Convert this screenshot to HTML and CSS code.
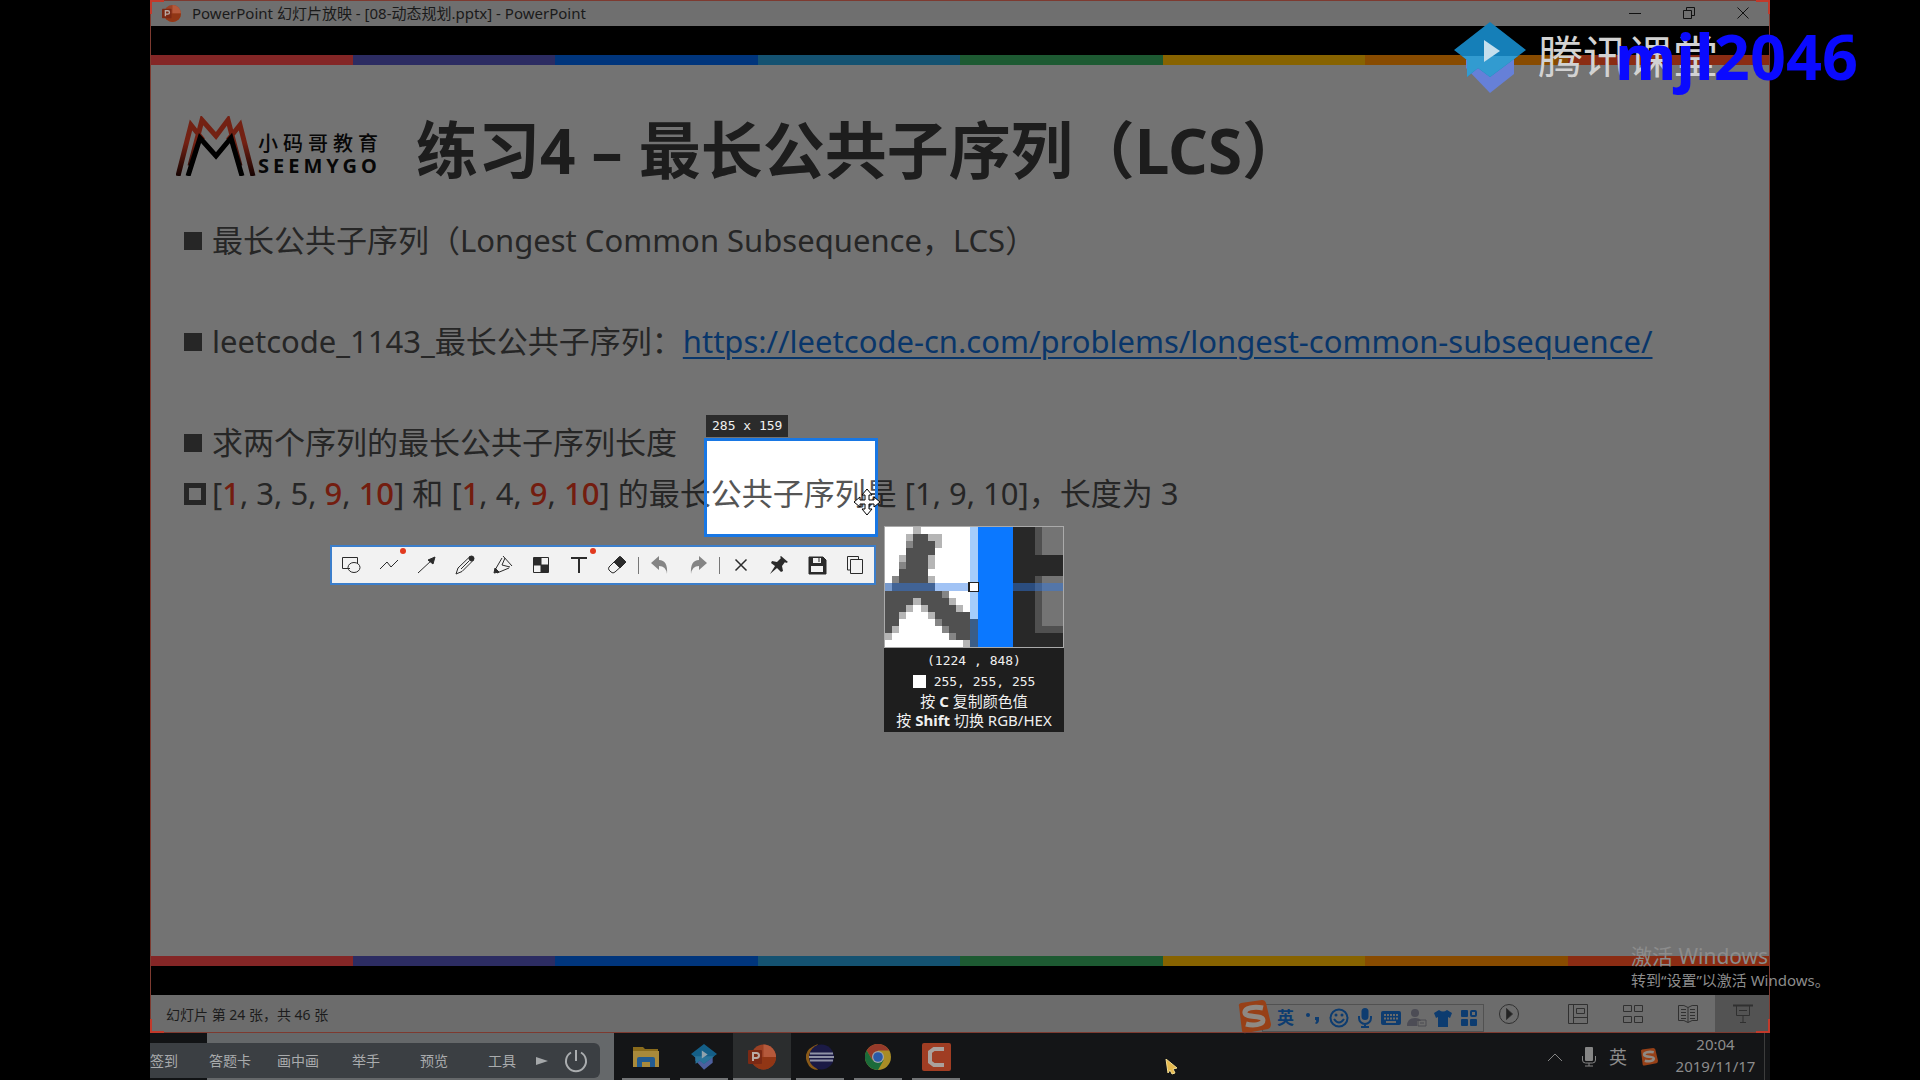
FILE: index.html
```html
<!DOCTYPE html>
<html lang="zh-CN">
<head>
    <meta charset="UTF-8">
    <meta name="viewport" content="width=device-width, initial-scale=1.0">
    <title>08-动态规划.pptx</title>
    <link rel="stylesheet" href="styles.css">
</head>
<body>
    <!-- shared shapes -->
    <svg class="defs" width="0" height="0">
        <symbol id="ppt" viewBox="0 0 28 26">
            <circle cx="15.5" cy="13" r="12.5" fill="#9c4124"/>
            <path d="M15.5 .5A12.500 12.500 0 0 1 28 13H15.500z" fill="#b5593b"/>
            <path d="M28 13a12.500 12.500 0 0 1-25 0z" fill="#913615"/>
            <rect x="0" y="6" width="14" height="14" rx="1" fill="#7b2914"/>
            <path d="M5 17V9h3.500a2.500 2.500 0 0 1 0 5H5" fill="none" stroke="#b9aaa5" stroke-width="2"/>
        </symbol>
        <symbol id="classroom" viewBox="0 0 72 72">
            <path d="M12 46V36h48v16L36 71z" fill="#6680d8"/>
            <path d="M0 28 36 0l36 28-36 27-12-9-11 9V38z" fill="#157fb8"/>
            <path d="M8 34h56L36 55l-12-9-11 9V38z" fill="#329bd0"/>
            <path d="M30 18v22l16-11z" fill="#c5dfed"/>
        </symbol>
        <symbol id="sogou" viewBox="0 0 34 34">
            <path d="M2 6Q1 4 4 3L25 0q3 0 4 3l5 21q0 4-3 5L9 33q-3 1-4-2z" fill="#974017"/>
            <path d="M26 8C17 6 7 8 8 13s18 2 18 7-10 6-17 4" fill="none" stroke="#8f8983" stroke-width="5"/>
        </symbol>
    </svg>

    <div class="recording">
        <header class="titlebar">
            <svg class="title-icon" width="19" height="19"><use href="#ppt"/></svg>
            <span class="title-text">PowerPoint 幻灯片放映 - [08-动态规划.pptx] - PowerPoint</span>
            <div class="window-buttons">
                <button type="button" aria-label="最小化"><svg width="12" height="12" viewBox="0 0 12 12"><path d="M0 6.500h12"/></svg></button>
                <button type="button" aria-label="还原"><svg width="12" height="12" viewBox="0 0 12 12"><path d="M.5 3.500h8v8h-8zM3.500 3.500v-3h8v8h-3"/></svg></button>
                <button type="button" aria-label="关闭"><svg width="12" height="12" viewBox="0 0 12 12"><path d="M.5.500l11 11M11.500.500l-11 11"/></svg></button>
            </div>
        </header>

        <div class="letterbox"></div>
        <div class="stripe"><i class="s1"></i><i class="s2"></i><i class="s3"></i><i class="s4"></i><i class="s5"></i><i class="s6"></i><i class="s7"></i><i class="s8"></i></div>

        <main class="slide">
            <div class="slide-head">
                <div class="brand">
                    <svg width="80" height="60" viewBox="0 0 80 60">
                        <defs>
                            <linearGradient id="mred" x1="0" y1="0" x2="0" y2="1">
                                <stop offset="0.4" stop-color="#ff4a2c"/><stop offset="1" stop-color="#300804"/>
                            </linearGradient>
                        </defs>
                        <path d="M2 60 15 9l12 15M14 50 26 4l14 16L52 4l12 46M52 24 64 9l13 51" fill="none" stroke="url(#mred)" stroke-width="5"/>
                        <path d="M12 60 24 22l16 18 15-18 11 38" fill="none" stroke="#000" stroke-width="5"/>
                    </svg>
                    <div class="brand-text">
                        <span class="brand-cn">小码哥教育</span>
                        <span class="brand-en">SEEMYGO</span>
                    </div>
                </div>
                <h1>练习4 – 最长公共子序列（LCS）</h1>
            </div>
            <ul class="points">
                <li>最长公共子序列（Longest Common Subsequence，LCS）</li>
                <li class="spaced">leetcode_1143_最长公共子序列：<a href="https://leetcode-cn.com/problems/longest-common-subsequence/">https://leetcode-cn.com/problems/longest-common-subsequence/</a></li>
                <li class="spaced">求两个序列的最长公共子序列长度</li>
                <li class="hollow">[<b>1</b>, 3, 5, <b>9</b>, <b>10</b>] 和 [<b>1</b>, 4, <b>9</b>, <b>10</b>] 的最长公共子序列是 [1, 9, 10]，长度为 3</li>
            </ul>
            <!-- everything outside the selection is dimmed by its shadow -->
            <div class="selection"></div>
        </main>

        <div class="stripe"><i class="s1"></i><i class="s2"></i><i class="s3"></i><i class="s4"></i><i class="s5"></i><i class="s6"></i><i class="s7"></i><i class="s8"></i></div>
        <div class="letterbox"></div>

        <footer class="statusbar">
            <span class="page-count">幻灯片 第 24 张，共 46 张</span>
            <div class="views">
                <button type="button" class="play" aria-label="播放"><svg width="22" height="22" viewBox="0 0 22 22"><circle cx="11" cy="11" r="9.500"/><path d="M8.500 5.500v11l6-5.500z" fill="#222"/></svg></button>
                <button type="button" aria-label="普通视图"><svg width="20" height="20" viewBox="0 0 20 20"><path d="M.5.500h19v19H.5zM5.500.500v19M5.500 13.500h14M8.500 4.500h8v5h-8z"/></svg></button>
                <button type="button" aria-label="浏览"><svg width="20" height="20" viewBox="0 0 20 20"><path d="M.5 1.500h8v6h-8zM11.500 1.500h8v6h-8zM.5 12.500h8v6h-8zM11.500 12.500h8v6h-8z"/></svg></button>
                <button type="button" aria-label="阅读视图"><svg width="20" height="20" viewBox="0 0 20 20"><path d="M.5 1.500q6-1 9.500 2 3.500-3 9.500-2v15q-6-1-9.500 2-3.500-3-9.500-2zM10 3.500v15M3 5.500h5M3 8.500h5M3 11.500h5M3 14.500h5M12 5.500h5M12 8.500h5M12 11.500h5M12 14.500h5"/></svg></button>
                <button type="button" class="active" aria-label="幻灯片放映"><svg width="20" height="20" viewBox="0 0 20 20"><path d="M0 1.500h20" stroke-width="2"/><path d="M3.500 2v9.500h13V2M6 6.500h8M10 12v6.500M7 18.500h6"/></svg></button>
            </div>
            <div class="ime">
                <svg class="ime-logo" width="34" height="34"><use href="#sogou"/></svg>
                <span class="ime-lang">英</span>
                <svg viewBox="0 0 20 20"><circle cx="5" cy="7" r="2"/><path d="M12 9h4v3q0 3-3 4l-1-1q2-1 1-3h-1z"/></svg>
                <svg viewBox="0 0 20 20"><circle cx="10" cy="10" r="8.500" class="line"/><circle cx="7" cy="7" r="1.500"/><circle cx="13" cy="7" r="1.500"/><path d="M5 11q5 7 10 0" class="line"/></svg>
                <svg viewBox="0 0 20 20"><rect x="6.500" y="0" width="7" height="12" rx="3.500"/><path d="M4 8v2a6 6 0 0 0 12 0V8M10 16v3M6 19h8" class="line"/></svg>
                <svg viewBox="0 0 20 20"><rect x="0" y="3" width="20" height="14" rx="2"/><path d="M3 7h14M3 10.500h14" stroke="#6a6a6a" stroke-width="2" stroke-dasharray="2 1"/><path d="M5 14h10" stroke="#6a6a6a" stroke-width="2"/></svg>
                <svg viewBox="0 0 20 20" class="muted"><circle cx="8" cy="5" r="4"/><path d="M0 18q0-8 8-8 5 0 6 3h-4v5z"/><path d="M11 12h8v6h-8zM13 15h4" fill="none" stroke="#4a4a50"/></svg>
                <svg viewBox="0 0 20 20"><path d="M6 2q4 3 8 0l5 3-2 5-2-1v10H5V9l-2 1-2-5z"/></svg>
                <svg viewBox="0 0 20 20"><rect x="2" y="2" width="7" height="7" rx="1"/><rect x="2" y="11" width="7" height="7" rx="1"/><rect x="11" y="11" width="7" height="7" rx="1"/><rect x="12" y="3" width="5" height="5" rx="1" class="line"/></svg>
            </div>
        </footer>

        <div class="frame"><i class="tl"></i><i class="tr"></i><i class="bl"></i><i class="br"></i></div>

        <nav class="taskbar">
            <div class="class-area">
                <div class="class-bar">
                    <button type="button">签到</button>
                    <button type="button">答题卡</button>
                    <button type="button">画中画</button>
                    <button type="button">举手</button>
                    <button type="button">预览</button>
                    <button type="button">工具</button>
                    <svg class="more" width="12" height="8" viewBox="0 0 12 8"><path d="M0 0l12 4-12 4z" fill="#a5a8aa"/></svg>
                    <svg class="power" width="24" height="24" viewBox="0 0 24 24"><path d="M7 3.500a10 10 0 1 0 10 0M12 1v11" fill="none" stroke="#aaadaf" stroke-width="2"/></svg>
                </div>
            </div>
            <div class="apps">
                <a href="#" aria-label="文件资源管理器"><svg width="26" height="22" viewBox="0 0 26 22"><path d="M0 1h10l2 2h13v18H0z" fill="#8a6b1c"/><path d="M0 5h26v16H0z" fill="#a98a3b"/><path d="M4 21v-8q0-2 2-2h14q2 0 2 2v8h-5v-5H9v5z" fill="#225b91"/></svg></a>
                <a href="#" aria-label="腾讯课堂"><svg class="dim" width="28" height="26"><use href="#classroom"/></svg></a>
                <a href="#" class="active" aria-label="PowerPoint"><svg width="28" height="26"><use href="#ppt"/></svg></a>
                <a href="#" aria-label="Eclipse"><svg width="28" height="26" viewBox="0 0 28 26"><path d="M12 0Q-4 6 1 18q3 8 11 8Q2 14 12 0z" fill="#8a5a18"/><circle cx="15.500" cy="13" r="12.500" fill="#1b1a45"/><path d="M4 9.500h23M3 13h25M4 16.500h23" stroke="#8f92a6" stroke-width="2"/></svg></a>
                <a href="#" aria-label="Chrome"><svg width="26" height="26" viewBox="0 0 26 26"><circle cx="13" cy="13" r="13" fill="#a88c26"/><path d="M1.700 6.500A13 13 0 0 1 24.300 6.500H13L7.400 16.200z" fill="#963a2a"/><path d="M1.700 6.500A13 13 0 0 0 13 26l5.600-9.800H7.400z" fill="#1b6b3a"/><circle cx="13" cy="13" r="6" fill="#a0a4a8"/><circle cx="13" cy="13" r="4.800" fill="#2a5aa8"/></svg></a>
                <a href="#" aria-label="Camtasia"><svg width="29" height="28" viewBox="0 0 29 28"><rect width="29" height="28" rx="2" fill="#a03d23"/><path d="M22 6H12L8 9v10l4 3h10" fill="none" stroke="#aaa19d" stroke-width="4"/></svg></a>
            </div>
            <div class="tray">
                <svg class="chevron" width="16" height="16" viewBox="0 0 16 16"><path d="M1 12l7-7 7 7" fill="none" stroke="#858585"/></svg>
                <svg width="14" height="20" viewBox="0 0 14 20"><rect x="3" y="0" width="8" height="14" rx="1" fill="#858585"/><path d="M.5 9v4q0 3 3 3h7q3 0 3-3V9M7 16v3M3 19h8" fill="none" stroke="#858585"/></svg>
                <span class="tray-lang">英</span>
                <svg width="18" height="18"><use href="#sogou"/></svg>
                <div class="clock"><span>20:04</span><span>2019/11/17</span></div>
            </div>
        </nav>

        <!-- screenshot tool, floating over the slide -->
        <div class="size-tip">285 x 159</div>
        <div class="toolbar">
            <button type="button" aria-label="形状"><svg viewBox="0 0 20 20"><path d="M9 13.500H1.500v-11h15V8"/><ellipse cx="13" cy="12.500" rx="6" ry="5"/></svg></button>
            <button type="button" class="dot" aria-label="折线"><svg viewBox="0 0 20 20"><path d="M1 14l7-7 4 5 7-7"/></svg></button>
            <button type="button" aria-label="箭头"><svg viewBox="0 0 20 20"><path d="M1 18L15 5"/><path d="M18 2l-2 7-5-4z" class="fill"/></svg></button>
            <button type="button" aria-label="铅笔"><svg viewBox="0 0 20 20"><path d="M1 19l2-6L15 1.500l3.500 3.500L7 16.500zM14 6l-8 8"/><circle cx="16.500" cy="3.500" r="2.500" class="fill"/></svg></button>
            <button type="button" aria-label="记号笔"><svg viewBox="0 0 20 20"><path d="M10 1l9 10M9 3L2 15l2 3 12-5M12 3l-3 7 8 2"/><path d="M1 18l1-5 4 4z" class="fill"/></svg></button>
            <button type="button" aria-label="马赛克"><svg viewBox="0 0 20 20"><path d="M2.500 2.500h15v15h-15z"/><path d="M3 3h7v7H3zM10 10h7v7h-7z" class="fill"/></svg></button>
            <button type="button" class="dot" aria-label="文字"><svg viewBox="0 0 20 20"><path d="M2 3h16M10 3v15" stroke-width="2"/></svg></button>
            <button type="button" aria-label="橡皮"><svg viewBox="0 0 20 20"><path d="M2 12L12 2q1-1 3 1l3 3q1 1 0 2L8 17q-2 2-4 0l-2-2q-1-1 0-3z"/><path d="M7 7l5-5q1-1 3 1l3 3q1 1 0 2l-5 5z" class="fill"/></svg></button>
            <i class="sep"></i>
            <button type="button" class="off" aria-label="撤销"><svg viewBox="0 0 20 20"><path d="M1 8l8-7v4q9 0 8 14-1-8-8-8v4z"/></svg></button>
            <button type="button" class="off" aria-label="重做"><svg viewBox="0 0 20 20"><path d="M19 8l-8-7v4Q2 5 3 19q1-8 8-8v4z"/></svg></button>
            <i class="sep"></i>
            <button type="button" aria-label="关闭截图"><svg viewBox="0 0 20 20"><path d="M4.500 4.500l11 11M15.500 4.500l-11 11" stroke-width="1.500"/></svg></button>
            <button type="button" aria-label="贴图"><svg viewBox="0 0 20 20"><path d="M12 1l7 6-2 1-1-1-3 4 1 5-2 1-4-4-7 6 5-8-4-3 1-2 5 1 4-4-1-1z" class="fill" stroke="none"/></svg></button>
            <button type="button" aria-label="保存"><svg viewBox="0 0 20 20"><path d="M2 2h14l3 3v14H2z" class="fill"/><path d="M6 3h8v5H6zM4 11h12v6H4z" fill="#f2f2f2" stroke="none"/><path d="M12 3v4"/></svg></button>
            <button type="button" aria-label="复制"><svg viewBox="0 0 20 20"><path d="M5.500 4.500h12v14h-12zM5 15H2.500V1.500h11V4"/></svg></button>
        </div>

        <div class="magnifier">
            <svg class="lens" viewBox="0 0 25 17" preserveAspectRatio="none" shape-rendering="crispEdges">
                <rect width="25" height="17" fill="#fff"/>
                <path fill="#b5b5b5" d="M4 0h1v1h-1zM3 1h1v1h-1zM6 1h2v1h-2zM7 2h1v1h-1zM2 4h1v1h-1zM6 4h1v2h-1zM6 7h1v1h-1zM0 8h1v1h-1zM4 10h1v1h-1zM3 11h1v1h-1zM5 11h1v1h-1zM9 10h1v1h-1zM10 11h1v1h-1zM2 12h1v1h-1zM6 12h1v1h-1zM1 14h1v1h-1zM0 15h1v1h-1zM11 16h1v1h-1z"/>
                <path fill="#858585" d="M3 2h1v1h-1zM2 5h1v1h-1zM1 7h1v1h-1zM8 9h1v1h-1zM7 13h1v1h-1zM8 14h1v1h-1zM9 15h1v1h-1z"/>
                <path fill="#505050" d="M4 1h2v1h-2zM4 2h3v1h-3zM3 3h4v1h-4zM3 4h3v2h-3zM2 6h4v1h-4zM2 7h4v1h-4zM1 8h6v1h-6zM0 9h8v1h-8zM0 10h4v1h-4zM5 10h4v1h-4zM0 11h3v1h-3zM6 11h4v1h-4zM0 12h2v2h-2zM7 12h5v1h-5zM8 13h4v1h-4zM0 14h1v1h-1zM9 14h3v1h-3zM10 15h2v1h-2z"/>
                <rect x="12" width="1" height="17" fill="#a5cdfb"/>
                <rect x="12" y="13" width="1" height="4" fill="#3b5d87"/>
                <rect x="18" width="7" height="17" fill="#282828"/>
                <path fill="#747474" d="M21 0h4v4h-4zM21 7h4v8h-4z"/>
                <path fill="#505050" d="M21 0h1v4h-1zM21 7h1v8h-1zM22 14h3v1h-3z"/>
                <rect y="8" width="25" height="1" fill="#2e7ae8" fill-opacity=".45"/>
                <rect x="13" width="5" height="17" fill="#0b78ff"/>
                <rect x="11.800" y="7.800" width="1.300" height="1.300" fill="#fff" stroke="#222" stroke-width=".15"/>
            </svg>
            <div class="mag-info">
                <p class="mono">(1224 , 848)</p>
                <p class="mono"><i class="swatch"></i>255, 255, 255</p>
                <p class="key">按 <b>C</b> 复制颜色值</p>
                <p class="key">按 <b>Shift</b> 切换 RGB/HEX</p>
            </div>
        </div>

        <svg class="move-cursor" width="28" height="28" viewBox="0 0 28 28"><path d="M14 1l5 6h-3v5h5V9l6 5-6 5v-3h-5v5h3l-5 6-5-6h3v-5H7v3l-6-5 6-5v3h5V7H9z" fill="#fff" stroke="#000"/></svg>
        <svg class="arrow-cursor" width="14" height="16" viewBox="0 0 14 16"><path d="M1 0l11 9-4 1 2 4-3 1-2-4-2 3z" fill="#e5b94f" stroke="#f3dc92"/></svg>
    </div>

    <div class="activate">
        <p class="activate-title">激活 Windows</p>
        <p>转到“设置”以激活 Windows。</p>
    </div>
    <div class="channel">
        <svg width="72" height="72"><use href="#classroom"/></svg>
        <span>腾讯课堂</span>
    </div>
    <div class="viewer-id">mjl2046</div>
</body>
</html>
```
FILE: styles.css
```css
* {
    box-sizing: border-box;
}

body {
    margin: 0;
    position: relative;
    min-height: 100vh;
    background-color: #000;
    font-family: "Noto Sans", "Noto Sans CJK SC", sans-serif;
    overflow: hidden;
}

p,
h1,
ul {
    margin: 0;
    padding: 0;
}

button {
    display: flex;
    align-items: center;
    justify-content: center;
    padding: 0;
    border: none;
    background: none;
    font-family: inherit;
}

.defs {
    position: absolute;
}

.recording {
    position: relative;
    display: flex;
    flex-direction: column;
    width: 84.375%;
    min-height: 100vh;
    margin: 0 auto;
}

/* Title bar */
.titlebar {
    display: flex;
    align-items: center;
    height: 26px;
    padding-left: 12px;
    background-color: #6f6f6f;
    color: #1a1a1a;
    font-size: 15px;
}

.title-text {
    margin-left: 11px;
    line-height: 24px;
}

.window-buttons {
    display: flex;
    margin-left: auto;
}

.window-buttons button {
    width: 54px;
    height: 26px;
}

.window-buttons svg {
    fill: none;
    stroke: #111;
}

.letterbox {
    height: 29px;
    background-color: #000;
}

.stripe {
    display: flex;
    height: 10px;
}

.stripe i {
    flex: 1;
}

.s1 { background-color: #842626; }
.s2 { background-color: #2c2c62; }
.s3 { background-color: #00357c; }
.s4 { background-color: #145271; }
.s5 { background-color: #1d5a32; }
.s6 { background-color: #876300; }
.s7 { background-color: #884b00; }
.s8 { background-color: #8b2c13; }

/* Slide */
.slide {
    position: relative;
    flex: 1;
    padding: 40px 26px 0;
    background-color: #fff;
    color: #555;
    overflow: hidden;
}

.slide-head {
    display: flex;
    align-items: center;
    height: 90px;
}

.brand {
    display: flex;
    align-items: flex-end;
    width: 240px;
    margin-bottom: 8px;
    color: #111;
}

.brand-text {
    display: flex;
    flex-direction: column;
    margin-left: 2px;
}

.brand-cn {
    font-size: 20px;
    font-weight: 500;
    line-height: 24px;
    letter-spacing: 5px;
    white-space: nowrap;
}

.brand-en {
    font-size: 20px;
    font-weight: 700;
    line-height: 20px;
    letter-spacing: 4px;
}

h1 {
    color: #404040;
    font-size: 62px;
    font-weight: 700;
    line-height: 90px;
    white-space: nowrap;
}

.points {
    padding: 20px 0 0 8px;
    list-style: none;
    font-size: 31px;
    line-height: 51px;
    white-space: nowrap;
}

.points li {
    display: flex;
    align-items: center;
    height: 51px;
    white-space: pre;
}

.points li::before {
    content: "";
    box-sizing: border-box;
    width: 18px;
    height: 18px;
    margin-right: 10px;
    background-color: #555;
}

.points .hollow::before {
    width: 22px;
    height: 22px;
    margin-right: 6px;
    border: 5px solid #555;
    background: none;
}

.points .spaced {
    margin-top: 50px;
}

.points a {
    color: #1679ea;
    text-decoration-thickness: 2px;
    text-underline-offset: 4px;
}

.points b {
    color: #ff4023;
    font-weight: 500;
}

.selection {
    position: absolute;
    left: 554px;
    top: 373px;
    width: 174px;
    height: 99px;
    border: 3px solid #1877e4;
    box-shadow: 0 0 0 2000px rgba(0, 0, 0, 0.55);
}

/* Status bar */
.statusbar {
    position: relative;
    display: flex;
    align-items: center;
    justify-content: space-between;
    height: 38px;
    padding-left: 16px;
    background-color: #6c6c6c;
    color: #1c1c1c;
    font-size: 14px;
}

.views {
    display: flex;
    height: 38px;
}

.views button {
    width: 55px;
}

.views .play {
    margin-right: 14px;
}

.views .active {
    background-color: #535353;
}

.views svg {
    fill: none;
    stroke: #303030;
}

.ime {
    position: absolute;
    right: 286px;
    top: 9px;
    display: flex;
    align-items: center;
    gap: 6px;
    height: 28px;
    padding: 0 4px 0 14px;
    border: 1px solid #515151;
    background-color: #6c6c6c;
    color: #0d3c70;
}

.ime svg {
    width: 20px;
    height: 20px;
    fill: #0d3c70;
}

.ime .line {
    fill: none;
    stroke: #0d3c70;
    stroke-width: 2;
}

.ime .muted {
    fill: #4c4c55;
}

.ime .ime-logo {
    position: absolute;
    left: -26px;
    top: -5px;
    width: 34px;
    height: 34px;
}

.ime-lang {
    width: 20px;
    font-size: 17px;
    font-weight: 700;
    line-height: 24px;
}

/* Recording frame with corner marks */
.frame {
    position: absolute;
    inset: 0 0 47px;
    border: 1px solid #7d3a30;
    pointer-events: none;
}

.frame i {
    position: absolute;
    width: 14px;
    height: 14px;
    border: 0 solid #c2392a;
}

.frame .tl { left: -1px; top: -1px; border-width: 2px 0 0 2px; }
.frame .tr { right: -1px; top: -1px; border-width: 2px 2px 0 0; }
.frame .bl { left: -1px; bottom: -1px; border-width: 0 0 2px 2px; }
.frame .br { right: -1px; bottom: -1px; border-width: 0 2px 2px 0; }

/* Taskbar */
.taskbar {
    display: flex;
    height: 47px;
    background-color: #141517;
}

.class-area {
    display: flex;
    align-items: flex-end;
    width: 464px;
    padding-bottom: 2px;
    background: linear-gradient(to right, #111315 57px, #65686a 57px);
    overflow: hidden;
}

.class-bar {
    display: flex;
    align-items: center;
    width: 450px;
    height: 35px;
    border-radius: 0 6px 6px 0;
    background-color: #3b3f43;
}

.class-bar button {
    flex: none;
    width: 68px;
    height: 32px;
    padding-bottom: 2px;
    color: #a9abad;
    font-size: 14px;
}

.class-bar button:first-child {
    width: 46px;
    justify-content: flex-start;
}

.more {
    margin-left: 0;
}

.power {
    margin-left: 16px;
}

.apps {
    display: flex;
    margin-left: 3px;
}

.apps a {
    display: flex;
    align-items: center;
    justify-content: center;
    width: 58px;
    background: linear-gradient(#727476, #727476) bottom / 48px 2px no-repeat;
}

.apps .active {
    background-color: #2b2d2e;
    background-size: 58px 2px;
}

.apps .dim {
    opacity: 0.7;
}

.tray {
    display: flex;
    align-items: center;
    gap: 17px;
    margin-left: auto;
    color: #8c8c8c;
}

.tray .chevron {
    margin-right: 2px;
}

.tray-lang {
    margin: 0 -4px;
    font-size: 18px;
    line-height: 44px;
}

.clock {
    display: flex;
    flex-direction: column;
    align-items: center;
    width: 94px;
    height: 47px;
    margin-left: -4px;
    margin-right: 5px;
    padding-right: 4px;
    border-right: 1px solid #3c3c3c;
    font-size: 15px;
    line-height: 22px;
}

/* Screenshot tool */
.size-tip {
    position: absolute;
    left: 556px;
    top: 415px;
    padding: 0 6px;
    background-color: #2b2b2b;
    color: #f0f0f0;
    font-family: "DejaVu Sans Mono", monospace;
    font-size: 13px;
    line-height: 22px;
}

.toolbar {
    position: absolute;
    left: 180px;
    top: 545px;
    display: flex;
    align-items: center;
    height: 40px;
    border: 2px solid #3b7ecb;
    background-color: #f2f2f2;
}

.toolbar button {
    position: relative;
    width: 38px;
    height: 36px;
}

.toolbar svg {
    width: 20px;
    height: 20px;
    fill: none;
    stroke: #2b2b2b;
}

.toolbar .fill {
    fill: #2b2b2b;
}

.toolbar .off svg {
    fill: #858585;
    stroke: none;
}

.toolbar .dot::after {
    content: "";
    position: absolute;
    right: 2px;
    top: 1px;
    width: 6px;
    height: 6px;
    border-radius: 50%;
    background-color: #e23a1e;
}

.sep {
    width: 1px;
    height: 17px;
    margin: 0 2px;
    background-color: #777;
}

.magnifier {
    position: absolute;
    left: 734px;
    top: 526px;
    width: 180px;
    background-color: #1e1e1e;
    color: #f0f0f0;
    text-align: center;
}

.lens {
    display: block;
    width: 100%;
    height: 122px;
    border: 1px solid #aaa;
}

.mag-info {
    padding: 2px 0;
}

.mono {
    display: flex;
    align-items: center;
    justify-content: center;
    font-family: "DejaVu Sans Mono", monospace;
    font-size: 13px;
    line-height: 21px;
    white-space: pre;
}

.swatch {
    width: 13px;
    height: 13px;
    margin-right: 8px;
    background-color: #fff;
}

.key {
    font-size: 15px;
    line-height: 19px;
}

.move-cursor {
    position: absolute;
    left: 703px;
    top: 488px;
}

.arrow-cursor {
    position: absolute;
    left: 1015px;
    top: 1059px;
}

/* Watermarks */
.activate {
    position: absolute;
    right: 89px;
    bottom: 89px;
    width: 200px;
    color: #8c8c8c;
    font-size: 15px;
    line-height: 22px;
    white-space: nowrap;
}

.activate-title {
    font-size: 21px;
    line-height: 26px;
}

.channel {
    position: absolute;
    right: 202px;
    top: 22px;
    display: flex;
    gap: 12px;
    color: #d2d2d2;
    font-size: 45px;
    line-height: 70px;
}

.viewer-id {
    position: absolute;
    right: 62px;
    top: 16px;
    color: #0a0aff;
    font-size: 63px;
    font-weight: 700;
    line-height: 80px;
}
```
